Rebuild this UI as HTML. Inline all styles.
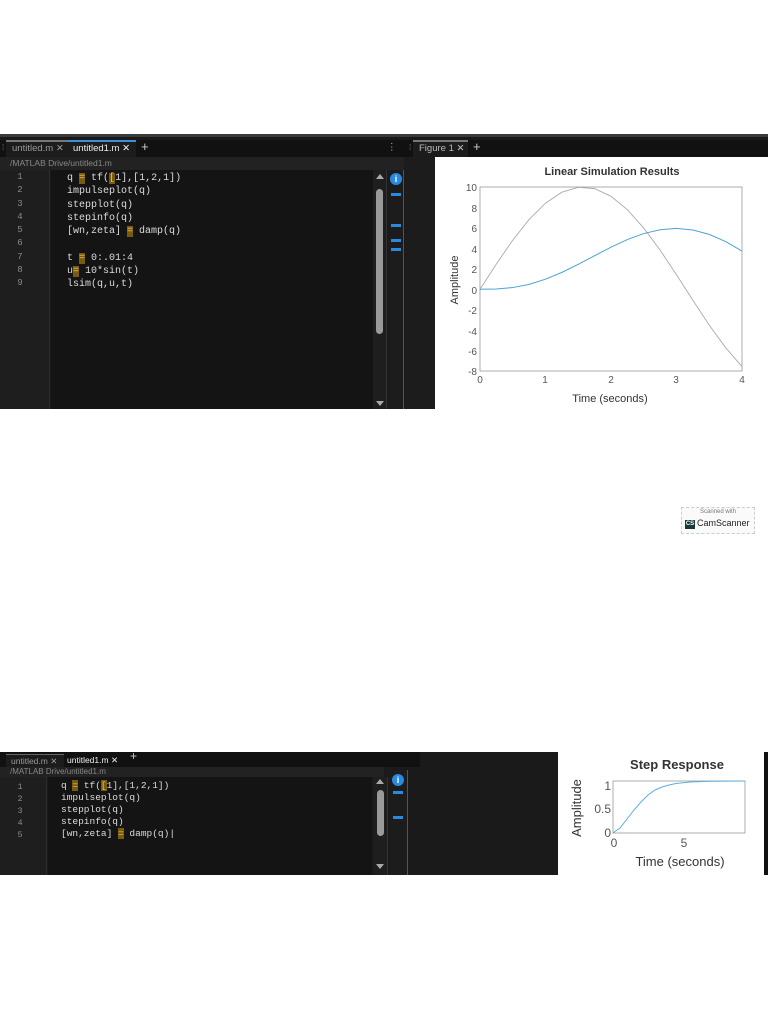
<!DOCTYPE html>
<html><head><meta charset="utf-8">
<style>
*{margin:0;padding:0;box-sizing:border-box}
body{width:768px;height:1024px;background:#fff;position:relative;overflow:hidden;font-family:"Liberation Sans",sans-serif}
.abs{position:absolute}
.mono{font-family:"Liberation Mono","DejaVu Sans Mono",monospace;color:#dcdcdc;white-space:pre;font-weight:normal}
.ln{font-family:"Liberation Mono",monospace;color:#8a8a8a;text-align:center}
.eq{background:#7a5a10;color:#e8c040}
.tab{position:absolute;color:#ddd;font-size:9.5px}
.blue{position:absolute;background:#2a8ae0;height:3px;width:10px}
</style></head><body>

<!-- TOP SCREENSHOT -->
<div class="abs" style="left:0;top:134px;width:768px;height:275px;background:#1a1a1a"></div>
<div class="abs" style="left:0;top:134px;width:768px;height:3px;background:#3a3a3a"></div>
<div class="abs" style="left:0;top:140px;width:768px;height:17px;background:#111"></div>
<div class="abs" style="left:6px;top:140px;width:62px;height:17px;background:#1c1c1c;border-top:2px solid #777"></div>
<div class="tab" style="left:12px;top:143px;color:#999">untitled.m ✕</div>
<div class="abs" style="left:68px;top:140px;width:68px;height:17px;background:#1c1c1c;border-top:2px solid #3a8fd8"></div>
<div class="tab" style="left:73px;top:143px;color:#eee">untitled1.m ✕</div>
<div class="tab" style="left:141px;top:139px;font-size:13px;color:#ccc">+</div>
<div class="tab" style="left:387px;top:142px;color:#bbb">⋮</div>
<div class="tab" style="left:2px;top:143px;color:#777;font-size:8px">⁞</div>
<div class="abs" style="left:413px;top:140px;width:55px;height:17px;background:#1c1c1c;border-top:2px solid #777"></div>
<div class="tab" style="left:419px;top:143px;color:#bbb">Figure 1 ✕</div>
<div class="tab" style="left:473px;top:139px;font-size:13px;color:#ccc">+</div>
<div class="tab" style="left:409px;top:143px;color:#777;font-size:8px">⁞</div>
<div class="abs" style="left:0;top:157px;width:404px;height:13px;background:#222"></div>
<div class="tab" style="left:10px;top:158px;color:#888;font-size:8.5px">/MATLAB Drive/untitled1.m</div>
<div class="abs" style="left:0;top:170px;width:50px;height:239px;background:#1e1e1e;border-right:1px solid #2c2c2c"></div>
<div class="abs" style="left:51px;top:170px;width:322px;height:239px;background:#141414"></div>
<div class="abs ln" style="left:0;top:171px;width:40px;font-size:9px;line-height:13.25px">1<br>2<br>3<br>4<br>5<br>6<br>7<br>8<br>9</div>
<div class="abs mono" style="left:67px;top:172px;font-size:10px;line-height:13.25px">q <span class="eq">=</span> tf(<span class="eq">[</span>1],[1,2,1])
impulseplot(q)
stepplot(q)
stepinfo(q)
[wn,zeta] <span class="eq">=</span> damp(q)

t <span class="eq">=</span> 0:.01:4
u<span class="eq">=</span> 10*sin(t)
lsim(q,u,t)</div>
<div class="abs" style="left:373px;top:170px;width:14px;height:239px;background:#1e1e1e;border-right:1px solid #333"></div>
<div class="abs" style="left:376px;top:189px;width:7px;height:145px;background:#9a9a9a;border-radius:4px"></div>
<div class="abs" style="left:376px;top:174px;width:0;height:0;border-left:4px solid transparent;border-right:4px solid transparent;border-bottom:5px solid #aaa"></div>
<div class="abs" style="left:376px;top:401px;width:0;height:0;border-left:4px solid transparent;border-right:4px solid transparent;border-top:5px solid #aaa"></div>
<div class="abs" style="left:388px;top:170px;width:16px;height:239px;background:#1c1c1c;border-right:1px solid #555"></div>
<div class="abs" style="left:390px;top:173px;width:12px;height:12px;border-radius:50%;background:#2a8ae0;color:#fff;font-size:9px;font-weight:bold;text-align:center;line-height:12px">i</div>
<div class="blue" style="left:391px;top:193px"></div>
<div class="blue" style="left:391px;top:224px"></div>
<div class="blue" style="left:391px;top:239px"></div>
<div class="blue" style="left:391px;top:248px"></div>
<div class="abs" style="left:405px;top:157px;width:30px;height:252px;background:#1c1c1c"></div>
<div class="abs" style="left:435px;top:157px;width:333px;height:252px;background:#fff"></div>
<svg class="abs" style="left:0;top:0" width="768" height="1024">
 <text x="612" y="175" font-size="11" font-weight="bold" fill="#333" text-anchor="middle" font-family="Liberation Sans">Linear Simulation Results</text>
 <rect x="480" y="187" width="262" height="184" fill="none" stroke="#999" stroke-width="0.8"/>
 <g font-size="10" fill="#555" text-anchor="end" font-family="Liberation Sans">
  <text x="477" y="191">10</text><text x="477" y="212">8</text><text x="477" y="232">6</text><text x="477" y="253">4</text><text x="477" y="273">2</text><text x="477" y="294">0</text><text x="477" y="314">-2</text><text x="477" y="335">-4</text><text x="477" y="355">-6</text><text x="477" y="375">-8</text>
 </g>
 <g font-size="10" fill="#555" text-anchor="middle" font-family="Liberation Sans">
  <text x="480" y="383">0</text><text x="545" y="383">1</text><text x="611" y="383">2</text><text x="676" y="383">3</text><text x="742" y="383">4</text>
 </g>
 <text x="610" y="402" font-size="11" fill="#333" text-anchor="middle" font-family="Liberation Sans">Time (seconds)</text>
 <text transform="translate(458,280) rotate(-90)" font-size="11" fill="#333" text-anchor="middle" font-family="Liberation Sans">Amplitude</text>
 <g transform="translate(480,289.2) scale(65.5,-10.222)">
  <polyline vector-effect="non-scaling-stroke" fill="none" stroke="#aaa" stroke-width="0.9" points="0,0 .25,2.47 .5,4.79 .75,6.82 1,8.41 1.25,9.49 1.5,9.97 1.75,9.84 2,9.09 2.25,7.78 2.5,5.98 2.75,3.82 3,1.41 3.25,-1.08 3.5,-3.51 3.75,-5.72 4,-7.57"/>
  <polyline vector-effect="non-scaling-stroke" fill="none" stroke="#4aa3d8" stroke-width="1" points="0,0 .25,.023 .5,.161 .75,.475 1,.977 1.25,1.646 1.5,2.435 1.75,3.28 2,4.11 2.25,4.857 2.5,5.443 2.75,5.82 3,5.946 3.25,5.795 3.5,5.36 3.75,4.66 4,3.726"/>
 </g>
</svg>

<div class="abs" style="left:681px;top:507px;width:74px;height:27px;border:1px dashed #ccc;background:#fafafa"></div>
<div class="abs" style="left:681px;top:509px;width:74px;text-align:center;font-size:6px;color:#777">Scanned with</div>
<div class="abs" style="left:685px;top:520px;width:10px;height:9px;background:#1a3a3a;color:#fff;font-size:6px;font-weight:bold;text-align:center;line-height:9px">CS</div>
<div class="abs" style="left:697px;top:518px;font-size:9px;color:#222">CamScanner</div>

<!-- BOTTOM SCREENSHOT -->
<div class="abs" style="left:0;top:752px;width:558px;height:123px;background:#1a1a1a"></div>
<div class="abs" style="left:0;top:752px;width:420px;height:15px;background:#111"></div>
<div class="abs" style="left:6px;top:754px;width:58px;height:13px;background:#1c1c1c;border-top:1px solid #666"></div>
<div class="tab" style="left:11px;top:756px;color:#999;font-size:8.5px">untitled.m ✕</div>
<div class="tab" style="left:67px;top:755px;color:#eee;font-size:8.5px">untitled1.m ✕</div>
<div class="tab" style="left:130px;top:749px;color:#ccc;font-size:12px">+</div>
<div class="abs" style="left:0;top:767px;width:384px;height:10px;background:#222"></div>
<div class="tab" style="left:10px;top:767px;color:#888;font-size:8px">/MATLAB Drive/untitled1.m</div>
<div class="abs" style="left:0;top:777px;width:47px;height:98px;background:#1e1e1e;border-right:1px solid #2c2c2c"></div>
<div class="abs" style="left:48px;top:777px;width:324px;height:98px;background:#141414"></div>
<div class="abs ln" style="left:0;top:781px;width:40px;font-size:8.5px;line-height:12px">1<br>2<br>3<br>4<br>5</div>
<div class="abs mono" style="left:61px;top:780px;font-size:9.5px;line-height:12px">q <span class="eq">=</span> tf(<span class="eq">[</span>1],[1,2,1])
impulseplot(q)
stepplot(q)
stepinfo(q)
[wn,zeta] <span class="eq">=</span> damp(q)|</div>
<div class="abs" style="left:373px;top:777px;width:15px;height:98px;background:#1e1e1e;border-right:1px solid #333"></div>
<div class="abs" style="left:377px;top:790px;width:7px;height:46px;background:#9a9a9a;border-radius:4px"></div>
<div class="abs" style="left:376px;top:779px;width:0;height:0;border-left:4px solid transparent;border-right:4px solid transparent;border-bottom:5px solid #aaa"></div>
<div class="abs" style="left:376px;top:864px;width:0;height:0;border-left:4px solid transparent;border-right:4px solid transparent;border-top:5px solid #aaa"></div>
<div class="abs" style="left:389px;top:770px;width:19px;height:105px;background:#1c1c1c;border-right:1px solid #555"></div>
<div class="abs" style="left:392px;top:774px;width:12px;height:12px;border-radius:50%;background:#2a8ae0;color:#fff;font-size:9px;font-weight:bold;text-align:center;line-height:12px">i</div>
<div class="blue" style="left:393px;top:791px"></div>
<div class="blue" style="left:393px;top:816px"></div>
<div class="abs" style="left:764px;top:752px;width:4px;height:123px;background:#111"></div>
<svg class="abs" style="left:0;top:0" width="768" height="1024">
 <text x="677" y="769" font-size="13" font-weight="bold" fill="#333" text-anchor="middle" font-family="Liberation Sans">Step Response</text>
 <rect x="613" y="781" width="132" height="52" fill="none" stroke="#999" stroke-width="0.8"/>
 <g font-size="12" fill="#555" font-family="Liberation Sans" text-anchor="end">
  <text x="611" y="790">1</text><text x="611" y="813">0.5</text><text x="611" y="837">0</text>
 </g>
 <g font-size="12" fill="#555" font-family="Liberation Sans" text-anchor="middle">
  <text x="614" y="847">0</text><text x="684" y="847">5</text>
 </g>
 <text x="680" y="866" font-size="13" fill="#333" text-anchor="middle" font-family="Liberation Sans">Time (seconds)</text>
 <text transform="translate(581,808) rotate(-90)" font-size="13" fill="#333" text-anchor="middle" font-family="Liberation Sans">Amplitude</text>
 <polyline fill="none" stroke="#5aaee0" stroke-width="1" points="613,833 620,828 627,819 634,810 641,802 648,795 655,790 662,787 669,785 676,783.5 690,782 710,781.3 745,781"/>
</svg>
</body></html>
